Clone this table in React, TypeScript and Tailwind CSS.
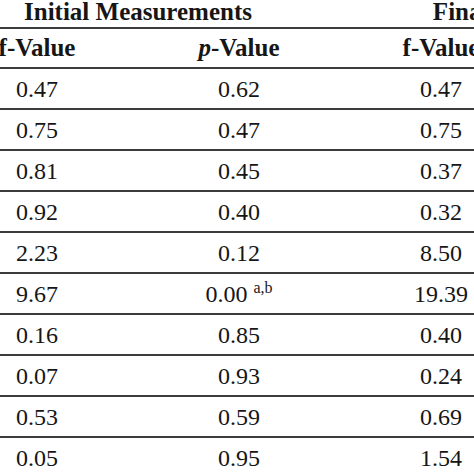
const rows: [string, string, string, string?][] = [
  ["0.47", "0.62", "0.47"],
  ["0.75", "0.47", "0.75"],
  ["0.81", "0.45", "0.37"],
  ["0.92", "0.40", "0.32"],
  ["2.23", "0.12", "8.50"],
  ["9.67", "0.00", "19.39", "a,b"],
  ["0.16", "0.85", "0.40"],
  ["0.07", "0.93", "0.24"],
  ["0.53", "0.59", "0.69"],
  ["0.05", "0.95", "1.54"],
];

export default function App() {
  return (
    <div className="w-[474px] h-[474px] overflow-hidden bg-white text-[#161616] font-['Liberation_Serif',serif] text-[24px]">
      <div className="ml-[-64px] w-[808px]">
        <div className="grid grid-cols-[404px_404px] h-[29px] border-b-2 border-[#3c3c3c] font-bold text-[25px]">
          <div className="text-center leading-[24px]">Initial Measurements</div>
          <div className="text-center leading-[24px]">Final Measurements</div>
        </div>
        <div className="grid grid-cols-[202px_202px_202px_202px] h-[40px] border-b-2 border-[#3c3c3c] font-bold text-[25px] items-center">
          <div className="text-center">f-Value</div>
          <div className="text-center">
            <span className="italic">p</span>-Value
          </div>
          <div className="text-center">f-Value</div>
          <div className="text-center">
            <span className="italic">p</span>-Value
          </div>
        </div>
        {rows.map((r, i) => (
          <div
            key={i}
            className="grid grid-cols-[202px_202px_202px_202px] h-[41px] border-b-2 border-[#3c3c3c] items-center"
          >
            <div className="text-center">{r[0]}</div>
            <div className="text-center">
              {r[1]}
              {r[3] && <sup className="text-[16px] ml-[6px] top-[-0.55em]">{r[3]}</sup>}
            </div>
            <div className="text-center">{r[2]}</div>
            <div />
          </div>
        ))}
      </div>
    </div>
  );
}
